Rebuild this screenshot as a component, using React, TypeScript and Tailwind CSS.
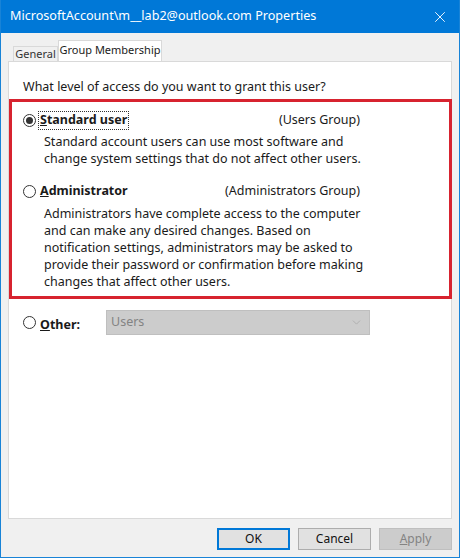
import { X, ChevronDown } from "lucide-react";

const font = { fontFamily: '"Noto Sans", "Open Sans", sans-serif' };

function Radio({ checked }: { checked?: boolean }) {
  return (
    <span className="flex h-[13px] w-[13px] shrink-0 items-center justify-center rounded-full border border-[#333] bg-white">
      {checked && <span className="h-[7px] w-[7px] rounded-full bg-[#333]" />}
    </span>
  );
}

function Btn({ label, variant }: { label: React.ReactNode; variant: "default" | "normal" | "disabled" }) {
  const cls =
    variant === "default"
      ? "border-2 border-[#0078d7] bg-[#e1e1e1] text-[#111]"
      : variant === "disabled"
      ? "border border-[#bfbfbf] bg-[#cccccc] text-[#838383]"
      : "border border-[#adadad] bg-[#e1e1e1] text-[#111]";
  return (
    <button className={`flex h-[22px] w-[73px] items-center justify-center text-[12px] ${cls}`}>{label}</button>
  );
}

export default function App() {
  return (
    <div
      style={font}
      className="flex h-[558px] w-[460px] flex-col border-x border-b border-[#1883d7] bg-[#f0f0f0] text-[12.5px] text-[#1a1a1a]"
    >
      {/* title bar */}
      <div className="flex h-[33px] shrink-0 items-center justify-between bg-[#0078d7] pl-[9px] pr-[10px] text-[12.6px] text-white">
        <span className="whitespace-nowrap">MicrosoftAccount\m__lab2@outlook.com Properties</span>
        <X className="h-[18px] w-[18px]" strokeWidth={1.2} />
      </div>

      {/* tabs */}
      <div className="mt-[7px] flex h-[21px] items-end whitespace-nowrap pl-[12px] text-[11px]">
        <div className="flex h-[15px] w-[45px] items-center justify-center border border-b-0 border-[#d9d9d9] bg-[#f0f0f0] text-[#333]">
          General
        </div>
        <div className="-mb-px flex h-[22px] w-[104px] items-center justify-center border border-b-0 border-[#d9d9d9] bg-white pb-[2px] text-[#1a1a1a]">
          Group Membership
        </div>
      </div>

      {/* panel */}
      <div className="mx-[7px] flex h-[458px] flex-col border border-[#d9d9d9] bg-white">
        <div className="mt-[16px] pl-[14px] leading-[17px]">What level of access do you want to grant this user?</div>

        <div className="mt-[4px] w-[443px] border-[3px] border-[#d7232f] pb-[6px] pt-[9px]">
          <div className="flex h-[18px] items-center whitespace-nowrap pl-[11px]">
            <Radio checked />
            <span className="ml-[2px] flex h-[19px] items-center border border-dotted border-[#333] px-[1px] font-bold">
              <span className="underline">S</span>tandard user
            </span>
            <span className="ml-auto pr-[89px]">(Users Group)</span>
          </div>
          <div className="mt-[4px] whitespace-nowrap pl-[32px] leading-[17px]">
            Standard account users can use most software and
            <br />
            change system settings that do not affect other users.
          </div>

          <div className="mt-[15px] flex h-[18px] items-center whitespace-nowrap pl-[11px]">
            <Radio />
            <span className="ml-[4px] font-bold">
              <span className="underline">A</span>dministrator
            </span>
            <span className="ml-auto pr-[89px]">(Administrators Group)</span>
          </div>
          <div className="mt-[5px] whitespace-nowrap pl-[32px] leading-[17px]">
            Administrators have complete access to the computer
            <br />
            and can make any desired changes. Based on
            <br />
            notification settings, administrators may be asked to
            <br />
            provide their password or confirmation before making
            <br />
            changes that affect other users.
          </div>
        </div>

        <div className="mt-[11px] flex items-center pl-[14px]">
          <Radio />
          <span className="ml-[4px] mt-[5px] w-[66px] font-bold">
            <span className="underline">O</span>ther:
          </span>
          <div className="flex h-[25px] w-[264px] items-center justify-between border border-[#bfbfbf] bg-[#cccccc] pl-[4px] pr-[6px] text-[#838383]">
            <span>Users</span>
            <ChevronDown className="h-[13px] w-[13px] text-[#a0a0a0]" strokeWidth={1.2} />
          </div>
        </div>
      </div>

      {/* buttons */}
      <div className="mt-[9px] flex justify-end gap-[8px] pr-[7px]">
        <Btn label="OK" variant="default" />
        <Btn label="Cancel" variant="normal" />
        <Btn
          label={
            <>
              <span className="underline">A</span>pply
            </>
          }
          variant="disabled"
        />
      </div>
    </div>
  );
}
